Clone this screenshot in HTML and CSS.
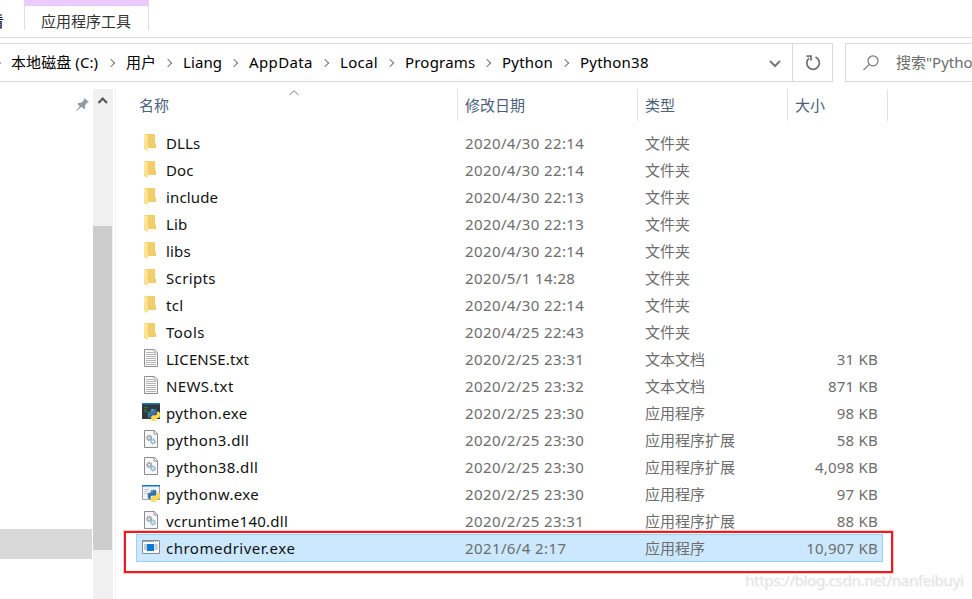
FILE: index.html
```html
<!DOCTYPE html>
<html lang="zh-CN">
<head>
<meta charset="utf-8">
<title>Python38</title>
<link rel="stylesheet" href="styles.css">
</head>
<body>
<svg class="defs" width="0" height="0">
  <defs>
    <linearGradient id="gold" x1="0" y1="0" x2="1" y2="1"><stop offset="0" stop-color="#f3d16c"/><stop offset="1" stop-color="#f1cc69"/></linearGradient>
    <linearGradient id="flap" x1="0" y1="0" x2="0" y2="1"><stop offset="0" stop-color="#ffeaa8"/><stop offset="1" stop-color="#fbdc83"/></linearGradient>
    <symbol id="folder" viewBox="0 0 18 18"><path d="M2 1h11v9l1 1v4H2z" fill="url(#gold)"/><path d="M2 1l3.500 1.500v15.500L2 16z" fill="url(#flap)"/><path d="M5 12l1-1v6L5 18z" fill="#ffe9a4"/></symbol>
    <symbol id="txt" viewBox="0 0 18 18"><path d="M2.500.5h10l3 3v14h-13z" fill="#fafafa" stroke="#909090"/><path d="M12 .5V4h3.500" fill="#fff" stroke="#909090" stroke-width=".8"/><path d="M4 3.500h7M4 5.500h10M4 7.500h10M4 9.500h10M4 11.500h10M4 13.500h10M4 15.500h10" stroke="#b4b4b4" stroke-width="1"/></symbol>
    <symbol id="dll" viewBox="0 0 18 18"><path d="M2.500.5h10l3 3v14h-13z" fill="#f7f7f7" stroke="#8d8d8d"/><path d="M12 .5V4h3.500" fill="#fff" stroke="#8d8d8d"/><circle cx="7.200" cy="7.900" r="2.300" fill="none" stroke="#929ca3" stroke-width="1.600" stroke-dasharray="1.100 .5"/><circle cx="7.200" cy="7.900" r="1.500" fill="none" stroke="#929ca3" stroke-width=".8"/><circle cx="11" cy="11.500" r="2.200" fill="none" stroke="#87b6d2" stroke-width="1.500" stroke-dasharray="1 .5"/><circle cx="11" cy="11.500" r="1.500" fill="none" stroke="#87b6d2" stroke-width=".8"/></symbol>
    <symbol id="snake" viewBox="0 0 12 12"><path d="M3 3V1.500Q3 0 5.500 0T8.500 1.500V4.500Q8.500 6 7 6H4Q3 6 3 7.500V9H1.500Q0 9 0 6T1.500 3H6z" fill="#3775a9"/><path d="M9 3h1.500Q12 3 12 6t-1.500 3H6h3v1.500Q9 12 6.200 12T3.500 10.500V8Q3.500 6.500 5 6.500H7.500Q9 6.500 9 5z" fill="#ffd94f"/><circle cx="4.400" cy="1.500" r=".6" fill="#fff"/><circle cx="7.600" cy="10.500" r=".6" fill="#fff"/></symbol>
    <symbol id="py" viewBox="0 0 18 18"><path d="M0 0h18v16H0z" fill="#31383c"/><path d="M0 0h18v1.500H0z" fill="#1777c5"/><path d="M2 4.500h4M2 6.500h3M2 8.500h4" stroke="#2f7445"/><use href="#snake" x="5.500" y="5.500" width="12.500" height="12.500"/></symbol>
    <symbol id="pyw" viewBox="0 0 18 18"><path d="M.5.500h17v14H.5z" fill="#f1f3f4" stroke="#9ca5ab"/><path d="M0 0h18v1.500H0z" fill="#0878d4"/><path d="M2 4.500h5M2 6.500h4M2 8.500h4" stroke="#c5cacd"/><use href="#snake" x="5.500" y="4.500" width="12.500" height="12.500"/></symbol>
    <symbol id="exe" viewBox="0 0 18 18"><path d="M.5.500h17v13h-17z" fill="#f9f9f9" stroke="#858b8f"/><path d="M1 1.500h16" stroke="#a4a8ab"/><path d="M12 1.500h1M14 1.500h1M16 1.500h1" stroke="#fff"/><path d="M2 5h3M2 7h3M2 9h3M12.500 5h3M12.500 7h3M12.500 9h3" stroke="#999"/><path d="M5 4h7v7H5z" fill="#0878d7"/></symbol>
  </defs>
</svg>
<div class="window">
  <div class="ribbon"><span class="view-tab">看</span><div class="tool-tab">应用程序工具</div></div>
  <div class="toolbar">
    <div class="address">
      <i class="root-mark"></i>
      <span class="crumb drive">本地磁盘 (C:)</span><span class="crumb users">用户</span><span class="crumb liang">Liang</span><span class="crumb appdata">AppData</span><span class="crumb local">Local</span><span class="crumb programs">Programs</span><span class="crumb python">Python</span><span class="crumb current">Python38</span>
      <svg class="down" width="12" height="8" viewBox="0 0 12 8"><path d="M1 1l5 5 5-5"/></svg>
      <div class="refresh"><svg width="16" height="16" viewBox="0 0 16 16"><path d="M10.500 2.200A6.300 6.300 0 1 1 4 3.200M1.500 1.200H6V5.500"/></svg></div>
    </div>
    <div class="search"><svg width="16" height="16" viewBox="0 0 16 16"><circle cx="10" cy="5.800" r="5"/><path d="M6.300 9.400L.5 15.200"/></svg><span>搜索"Python38"</span></div>
  </div>
  <div class="content">
    <aside class="nav"><svg class="pin" width="13" height="13" viewBox="0 0 13 13"><path d="M8 0l5 4-2 .7-2 3 .2 2.500-1 1-2.500-2.500L.5 13 0 12.500l3.800-4L1.500 6l.8-1 3-.2L8 2z"/></svg><div class="nav-selected"></div></aside>
    <div class="scroll"><svg width="12" height="9" viewBox="0 0 12 9"><path d="M1.500 7L5.700 2.500 10 7"/></svg><div class="thumb"></div></div>
    <div class="divider"></div>
    <main class="files">
      <div class="head"><span>名称<svg class="sort" width="10" height="6" viewBox="0 0 10 6"><path d="M.5 5L5 .7 9.500 5"/></svg></span><span>修改日期</span><span>类型</span><span>大小</span></div>
      <div class="row"><svg><use href="#folder"/></svg><b>DLLs</b><time>2020/4/30 22:14</time><span>文件夹</span></div>
      <div class="row"><svg><use href="#folder"/></svg><b>Doc</b><time>2020/4/30 22:14</time><span>文件夹</span></div>
      <div class="row"><svg><use href="#folder"/></svg><b>include</b><time>2020/4/30 22:13</time><span>文件夹</span></div>
      <div class="row"><svg><use href="#folder"/></svg><b>Lib</b><time>2020/4/30 22:13</time><span>文件夹</span></div>
      <div class="row"><svg><use href="#folder"/></svg><b>libs</b><time>2020/4/30 22:14</time><span>文件夹</span></div>
      <div class="row"><svg><use href="#folder"/></svg><b class="loose">Scripts</b><time>2020/5/1 14:28</time><span>文件夹</span></div>
      <div class="row"><svg><use href="#folder"/></svg><b class="loose">tcl</b><time>2020/4/30 22:14</time><span>文件夹</span></div>
      <div class="row"><svg><use href="#folder"/></svg><b class="looser">Tools</b><time>2020/4/25 22:43</time><span>文件夹</span></div>
      <div class="row"><svg><use href="#txt"/></svg><b>LICENSE.txt</b><time>2020/2/25 23:31</time><span>文本文档</span><em>31 KB</em></div>
      <div class="row"><svg><use href="#txt"/></svg><b class="loose">NEWS.txt</b><time>2020/2/25 23:32</time><span>文本文档</span><em>871 KB</em></div>
      <div class="row"><svg><use href="#py"/></svg><b class="loose">python.exe</b><time>2020/2/25 23:30</time><span>应用程序</span><em>98 KB</em></div>
      <div class="row"><svg><use href="#dll"/></svg><b class="loose">python3.dll</b><time>2020/2/25 23:30</time><span>应用程序扩展</span><em>58 KB</em></div>
      <div class="row"><svg><use href="#dll"/></svg><b class="loose">python38.dll</b><time>2020/2/25 23:30</time><span>应用程序扩展</span><em>4,098 KB</em></div>
      <div class="row"><svg class="low"><use href="#pyw"/></svg><b class="loose">pythonw.exe</b><time>2020/2/25 23:30</time><span>应用程序</span><em>97 KB</em></div>
      <div class="row"><svg><use href="#dll"/></svg><b class="vc">vcruntime140.dll</b><time>2020/2/25 23:31</time><span>应用程序扩展</span><em>88 KB</em></div>
      <div class="row selected"><svg><use href="#exe"/></svg><b class="looser">chromedriver.exe</b><time>2021/6/4 2:17</time><span>应用程序</span><em>10,907 KB</em><i class="outline"></i></div>
    </main>
  </div>
  <div class="watermark">https://blog.csdn.net/nanfeibuyi</div>
</div>
</body>
</html>
```
FILE: styles.css
```css
* { box-sizing: border-box; }
body { margin: 0; background: #fff; color: #111; font: 15px/27px "Noto Sans", "Noto Sans CJK SC", sans-serif; }
.defs { position: absolute; }
.window { position: relative; width: 972px; height: 599px; overflow: hidden; white-space: nowrap; }
svg { display: block; fill: none; }

.ribbon { display: flex; height: 38px; border-bottom: 1px solid #dadada; }
.view-tab { display: flex; justify-content: flex-end; width: 4px; margin-right: 20px; padding-top: 8px; overflow: hidden; }
.tool-tab { width: 125px; height: 30px; border: solid; border-width: 6px 1px 0; border-color: #ebcbfd #dedede; padding: 2px 1px 0 0; text-align: center; color: #333; }

.toolbar { display: flex; height: 39px; margin-top: 5px; }
.address { display: flex; align-items: center; flex: none; width: 833px; border: 1px solid #d9d9d9; border-left: 0; color: #000; }
.root-mark { width: 1px; height: 2px; margin-right: 10px; background: #aaa; }
.crumb { position: relative; flex: none; height: 32px; line-height: 30px; }
.crumb:not(.current)::after { content: ""; position: absolute; right: 12px; top: 13px; width: 5px; height: 5px; border: solid #777; border-width: 1.5px 1.5px 0 0; transform: rotate(45deg); }
.drive { width: 115px; letter-spacing: .08px; }
.users { width: 57px; }
.liang { width: 66px; letter-spacing: .1px; }
.appdata { width: 91px; letter-spacing: .38px; }
.local { width: 65px; letter-spacing: .3px; }
.programs { width: 97px; letter-spacing: .2px; }
.python { width: 78px; letter-spacing: .2px; }
.current { width: 189px; letter-spacing: .22px; }
.down { flex: none; stroke: #777; stroke-width: 2; margin-top: 3px; }
.refresh { display: flex; align-items: center; justify-content: center; width: 40px; height: 37px; margin-left: auto; border-left: 1px solid #d9d9d9; }
.refresh svg { stroke: #747474; stroke-width: 1.8; }
.search { display: flex; align-items: center; flex: none; width: 180px; margin-left: 12px; border: 1px solid #d9d9d9; color: #6d6d6d; }
.search svg { flex: none; margin: 0 17px; stroke: #777; stroke-width: 1.2; }

.content { display: flex; height: 517px; }
.nav { width: 93px; padding-top: 16px; }
.pin { margin-left: 76px; fill: #8f9ba5; }
.nav-selected { width: 92px; height: 30px; margin-top: 418px; background: #d9d9d9; }
.scroll { width: 20px; margin-top: 7px; background: #f0f0f0; padding-top: 7px; }
.scroll svg { margin-left: 4px; stroke: #555; stroke-width: 2.2; }
.thumb { width: 19px; height: 324px; margin-top: 121px; background: #cdcdcd; }
.divider { width: 1px; margin: 7px 20px 0 2px; background: #f3f3f3; }
.files { width: 747px; padding-top: 7px; }
.head { display: grid; grid-template-columns: 322px 180px 150px 100px; height: 41px; color: #4c607a; }
.head span { position: relative; height: 32px; padding: 3px 0 0 7px; border-right: 1px solid #e2e2e2; }
.head span:first-child { padding-left: 3px; }
.sort { position: absolute; left: 153px; top: 1px; stroke: #777; }
.row { position: relative; display: grid; grid-template-columns: 30px 299px 180px 150px 83px; height: 27px; color: #6d6d6d; }
.row > svg { width: 18px; height: 18px; margin: 3px 0 0 6px; }
.row > .low { margin-top: 4px; }
.row b { font-weight: 400; color: #111; letter-spacing: .15px; }
.row .loose { letter-spacing: .37px; }
.row .looser { letter-spacing: .5px; }
.row .vc { letter-spacing: .25px; }
.row time { letter-spacing: .39px; }
.row em { font-style: normal; text-align: right; letter-spacing: .22px; }
.selected { background: #cce8ff; box-shadow: inset 0 0 0 1px #99d1ff, 0 -1px #99d1ff; }
.selected { height: 28px; margin-top: -1px; padding-top: 1px; box-shadow: inset 0 0 0 1px #99d1ff; }
.outline { position: absolute; left: -12px; top: -3px; width: 769px; height: 42px; border: 2px solid #ed1c24; box-shadow: 0 0 0 1px #f9c6c8; }
.row.selected > svg { margin-top: 5px; }
.watermark { position: absolute; left: 745px; top: 567px; color: #e4e4e4; text-shadow: 1px 1px #f7f7f7; letter-spacing: -.27px; }
```
